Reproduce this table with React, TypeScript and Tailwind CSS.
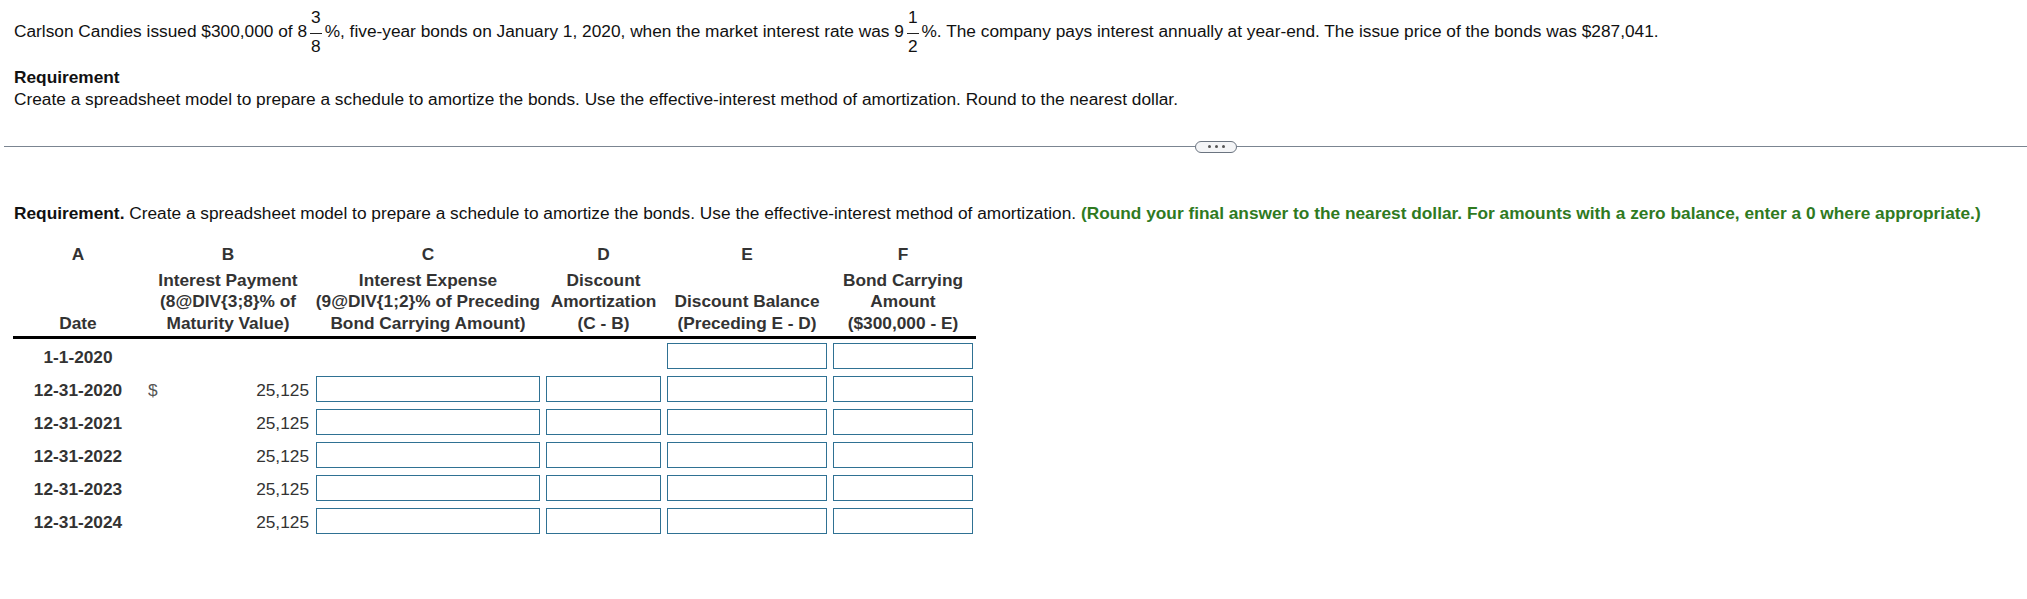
import React from 'react';

const Frac = ({ n, d }: { n: string; d: string }) => (
  <span className="inline-flex flex-col items-center align-[14px] leading-[18px] mx-[3px]">
    <span className="px-[1px] pb-[7px]">{n}</span>
    <span className="w-full border-t border-[#222]" />
    <span className="px-[1px] pt-[2.5px]">{d}</span>
  </span>
);

const Cell = ({ className = '' }: { className?: string }) => (
  <div className={`px-[3px] flex items-center ${className}`}>
    <div className="w-full h-[26px] border border-[#2f7193] bg-white" />
  </div>
);

const rows = ['12-31-2020', '12-31-2021', '12-31-2022', '12-31-2023', '12-31-2024'];

export default function App() {
  return (
    <div className="min-h-screen bg-white font-['Liberation_Sans',Arial,sans-serif] text-[17.3px] text-[#111]">
      <div className="pl-[14px] pt-[8px] leading-[22px]">
        Carlson Candies issued $300,000 of 8<Frac n="3" d="8" />%, five-year bonds on January 1, 2020, when the market
        interest rate was 9<Frac n="1" d="2" />%. The company pays interest annually at year-end. The issue price of the
        bonds was $287,041.
      </div>

      <div className="pl-[14px] mt-[11px] leading-[22px]">
        <div className="font-bold">Requirement</div>
        <div>
          Create a spreadsheet model to prepare a schedule to amortize the bonds. Use the effective-interest method of
          amortization. Round to the nearest dollar.
        </div>
      </div>

      <div className="ml-[4px] mt-[31px] flex items-center h-[12px]">
        <div className="w-[1191px] h-px bg-[#7b8591]" />
        <button className="w-[42px] h-[12px] rounded-full border border-[#6b7480] bg-[#f4f5f7] flex items-center justify-center gap-[4px]">
          <span className="w-[3px] h-[3px] rounded-full bg-[#555]" />
          <span className="w-[3px] h-[3px] rounded-full bg-[#555]" />
          <span className="w-[3px] h-[3px] rounded-full bg-[#555]" />
        </button>
        <div className="flex-1 h-px bg-[#7b8591]" />
      </div>

      <div className="pl-[14px] mt-[49px] leading-[22px]">
        <span className="font-bold">Requirement.</span> Create a spreadsheet model to prepare a schedule to amortize the
        bonds. Use the effective-interest method of amortization.{' '}
        <span className="font-bold text-[#2f7a1f]">
          (Round your final answer to the nearest dollar. For amounts with a zero balance, enter a 0 where appropriate.)
        </span>
      </div>

      <div className="ml-[13px] mt-[20px] w-[963px] text-[#333] leading-[21.7px]">
        <div className="grid grid-cols-[130px_170px_230px_121px_166px_146px] font-bold text-center h-[26px]">
          <div>A</div>
          <div>B</div>
          <div>C</div>
          <div>D</div>
          <div>E</div>
          <div>F</div>
        </div>
        <div className="grid grid-cols-[130px_170px_230px_121px_166px_146px] font-bold text-center items-end pb-[1px] border-b-[3px] border-black">
          <div>Date</div>
          <div>
            Interest Payment
            <br />
            (8@DIV{'{'}3;8{'}'}% of
            <br />
            Maturity Value)
          </div>
          <div>
            Interest Expense
            <br />
            (9@DIV{'{'}1;2{'}'}% of Preceding
            <br />
            Bond Carrying Amount)
          </div>
          <div>
            Discount
            <br />
            Amortization
            <br />
            (C - B)
          </div>
          <div>
            Discount Balance
            <br />
            (Preceding E - D)
          </div>
          <div>
            Bond Carrying
            <br />
            Amount
            <br />
            ($300,000 - E)
          </div>
        </div>

        <div className="pt-[1px]">
          <div className="grid grid-cols-[130px_170px_230px_121px_166px_146px] h-[33px]">
            <div className="flex items-center justify-center font-bold pt-[4px]">1-1-2020</div>
            <div />
            <div />
            <div />
            <Cell />
            <Cell />
          </div>
          {rows.map((d, i) => (
            <div key={d} className="grid grid-cols-[130px_170px_230px_121px_166px_146px] h-[33px]">
              <div className="flex items-center justify-center font-bold pt-[4px]">{d}</div>
              <div className="flex items-center justify-between pl-[5px] pr-[4px] pt-[4px]">
                <span className="text-[#555]">{i === 0 ? '$' : ''}</span>
                <span>25,125</span>
              </div>
              <Cell />
              <Cell />
              <Cell />
              <Cell />
            </div>
          ))}
        </div>
      </div>
    </div>
  );
}
